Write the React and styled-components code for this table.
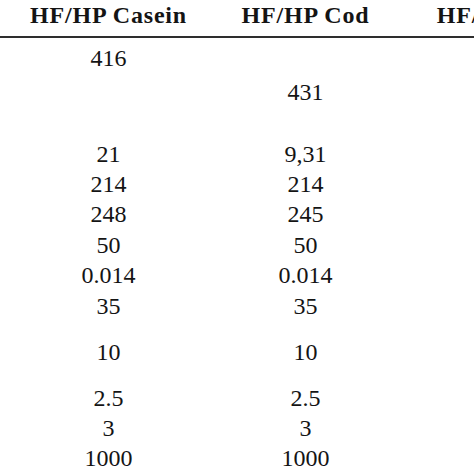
import React from "react";
import styled, { createGlobalStyle } from "styled-components";

const GlobalStyle = createGlobalStyle`
  html, body {
    margin: 0;
    padding: 0;
    background: #ffffff;
    overflow: hidden;
  }
  body {
    font-family: "Liberation Serif", "Times New Roman", serif;
    color: #141414;
  }
`;

const Page = styled.div`
  width: 474px;
  height: 474px;
  overflow: hidden;
`;

const Table = styled.table`
  border-collapse: collapse;
  table-layout: fixed;
  width: 601px;
  font-size: 24px;
`;

const HeadRow = styled.tr`
  height: 37px;
  border-bottom: 2px solid #2e2e2e;
`;

const HeadCell = styled.th`
  width: ${(p) => p.$w}px;
  padding: 0;
  font-weight: 700;
  letter-spacing: 0.8px;
  text-align: center;
  vertical-align: top;
  padding-top: 2px;
  white-space: nowrap;
`;

const BodyRow = styled.tr`
  height: ${(p) => p.$h}px;
`;

const Cell = styled.td`
  padding: 0;
  text-align: center;
  vertical-align: middle;
  line-height: 1;
  white-space: nowrap;
`;

const Spacer = styled.tr`
  height: ${(p) => p.$h}px;
`;

const columns = ["HF/HP Casein", "HF/HP Cod", "HF/HP Beef"];

const rows = [
  { h: 37, v: ["416", "", ""] },
  { h: 31, v: ["", "431", ""] },
  { h: 31, v: ["", "", ""] },
  { h: 31, v: ["21", "9,31", ""] },
  { h: 30, v: ["214", "214", ""] },
  { h: 30, v: ["248", "245", ""] },
  { h: 31, v: ["50", "50", ""] },
  { h: 30, v: ["0.014", "0.014", ""] },
  { h: 31, v: ["35", "35", ""] },
  { h: 62, v: ["10", "10", ""] },
  { h: 30, v: ["2.5", "2.5", ""] },
  { h: 30, v: ["3", "3", ""] },
  { h: 30, v: ["1000", "1000", ""] },
];

export default function App() {
  return (
    <Page>
      <GlobalStyle />
      <Table>
        <thead>
          <HeadRow>
            <HeadCell $w={10} />
            {columns.map((c) => (
              <HeadCell key={c} $w={197}>
                {c}
              </HeadCell>
            ))}
          </HeadRow>
        </thead>
        <tbody>
          <Spacer $h={2} />
          {rows.map((r, i) => (
            <BodyRow key={i} $h={r.h}>
              <Cell />
              {r.v.map((v, j) => (
                <Cell key={j}>{v}</Cell>
              ))}
            </BodyRow>
          ))}
        </tbody>
      </Table>
    </Page>
  );
}
